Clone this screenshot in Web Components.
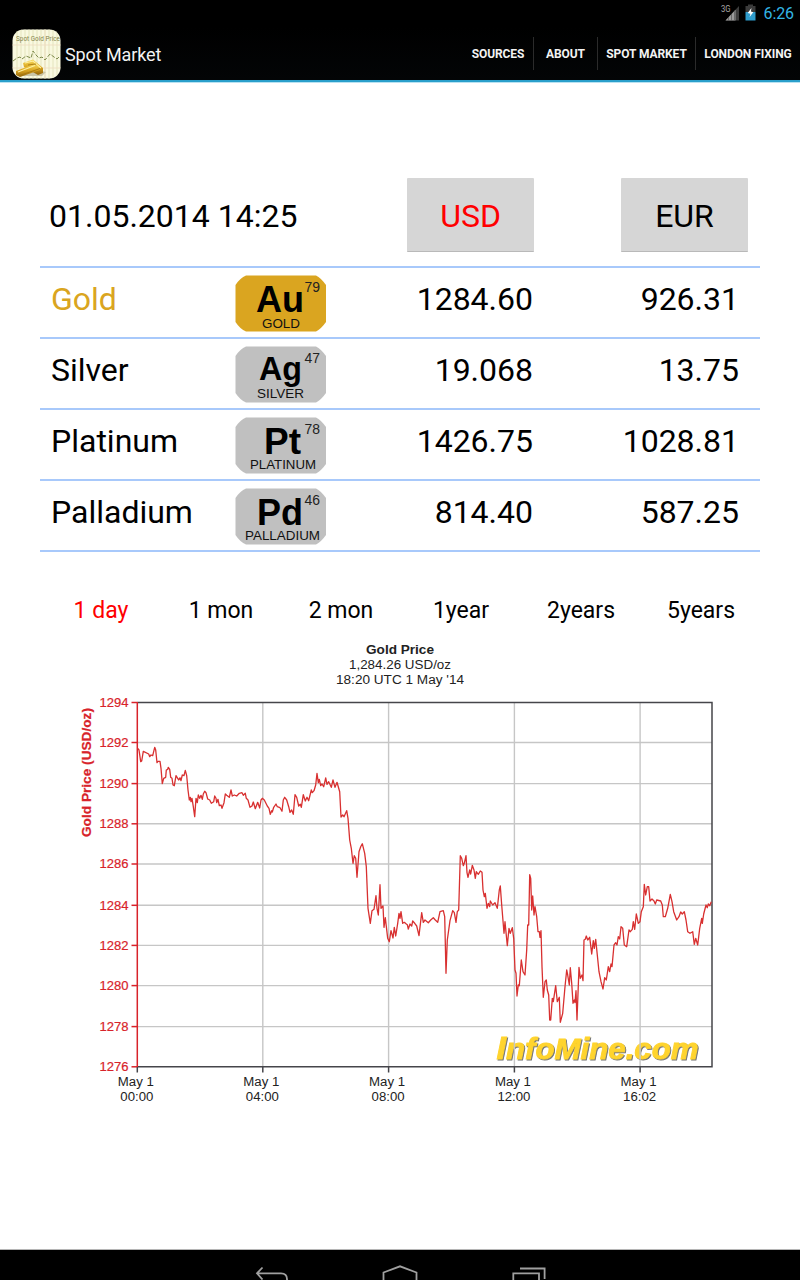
<!DOCTYPE html>
<html lang="en">
<head>
<meta charset="utf-8">
<title>Spot Market</title>
<style>
    html, body { margin: 0; padding: 0; }
    body {
        width: 800px;
        height: 1280px;
        overflow: hidden;
        background: #fff;
        color: #000;
        font-family: Roboto, "Liberation Sans", sans-serif;
    }
</style>
</head>
<body>
<spot-app></spot-app>

<script>
// Small helper: attach an open shadow root and fill it
function fill(el, html) {
    el.attachShadow({ mode: "open" }).innerHTML = html;
}

// Status bar with signal, battery and clock
class StatusBar extends HTMLElement {
    connectedCallback() {
        fill(this, `
            <style>
                :host {
                    display: flex;
                    justify-content: flex-end;
                    height: 27px;
                    background: #000;
                    color: #33b5e5;
                    font-size: 16px;
                    line-height: 27px;
                    padding-right: 6px;
                }
                svg { display: block; margin-right: 5px; }
                span { letter-spacing: -0.1px; }
            </style>
            <svg width="39" height="27" viewBox="0 0 39 27">
                <text x="1" y="11.5" font-size="8.5" fill="#a8a8a8" textLength="9.5" lengthAdjust="spacingAndGlyphs">3G</text>
                <path d="M5.5 20.5L19 6V20.5Z" fill="#3c3c3c"/>
                <path d="M5.5 20.5L15.5 9.8V20.5Z" fill="#9a9a9a"/>
                <path d="M8.5 17v4M11.5 14v7M14.5 11v10" stroke="#555" stroke-width=".7"/>
                <path d="M25.500 6H28V4.500H33V6H35.500V12H25.500Z" fill="#3b3b3b"/>
                <path d="M25.500 12H35.500V20.500H25.500Z" fill="#2f9ccc"/>
                <path d="M31.500 8L27.700 13L30.400 13.800L29.600 17L33.300 12.200L30.900 11.500Z" fill="#fff"/>
            </svg>
            <span>${this.getAttribute("time")}</span>
        `);
    }
}
customElements.define("status-bar", StatusBar);

// Launcher icon: gold bars in front of a price sheet
class AppIcon extends HTMLElement {
    connectedCallback() {
        fill(this, `
            <style>
                :host { display: block; width: 50px; height: 50px; }
                svg { display: block; }
            </style>
            <svg width="50" height="50" viewBox="0 0 50 50">
                <defs>
                    <clipPath id="c"><rect x=".5" y=".5" width="48" height="49" rx="11"/></clipPath>
                    <linearGradient id="g" x2="0" y2="1">
                        <stop offset="0" stop-color="#f8da5e"/>
                        <stop offset=".5" stop-color="#d9a520"/>
                        <stop offset="1" stop-color="#94660c"/>
                    </linearGradient>
                </defs>
                <g clip-path="url(#c)">
                    <rect width="50" height="50" fill="#f9f9e0"/>
                    <path d="M5 0V50M9 0V50M13 0V50M17 0V50M21 0V50M25 0V50M29 0V50M33 0V50M37 0V50M41 0V50M45 0V50" stroke="#e4e4bd" stroke-width="1"/>
                    <path d="M0 16H50M0 39H50M33 0V50" stroke="#efdcc0" stroke-width=".8"/>
                    <text x="4" y="11.5" font-size="6.5" fill="#85854a" textLength="44" lengthAdjust="spacingAndGlyphs">Spot Gold Price</text>
                    <path d="M1 32L5 29L8 28L10 30L14 27L19 29L21 22L24 26L27 29L30 28L33 31L38 25L42 28L45 30L49 26" fill="none" stroke="#7d8a4c" stroke-width="1" stroke-dasharray="4 1.500"/>
                    <path d="M7 47L30 47L34 43L20 40Z" fill="#c9c5a8"/>
                    <path d="M11 34L21 30.500L31 39L31 44L26 46L12 38Z" fill="url(#g)"/>
                    <path d="M4 42L22 35L28 38L28 41L8 48L4 46Z" fill="url(#g)"/>
                    <path d="M6 43L23 36.500M13 34L21 32L29 39" stroke="#fff0a0" stroke-width="1.100" fill="none"/>
                    <path d="M8 46.500L28 39.500M16 36L24 35" stroke="#a1740f" stroke-width=".8"/>
                </g>
            </svg>
        `);
    }
}
customElements.define("app-icon", AppIcon);

class MenuItem extends HTMLElement {
    connectedCallback() {
        fill(this, `
            <style>
                :host {
                    display: flex;
                    align-items: center;
                    justify-content: center;
                    box-sizing: border-box;
                    height: 33px;
                    padding-top: 1px;
                    border-left: 1px solid #2b2b2b;
                    color: #f3f3f3;
                    font-size: 12px;
                    font-weight: 700;
                    letter-spacing: -0.08px;
                    white-space: nowrap;
                }
                :host(:first-of-type) { border-color: transparent; }
            </style>
            <span><slot></slot></span>
        `);
    }
}
customElements.define("menu-item", MenuItem);

class ActionBar extends HTMLElement {
    connectedCallback() {
        fill(this, `
            <style>
                :host {
                    display: flex;
                    align-items: center;
                    box-sizing: border-box;
                    height: 55px;
                    padding-left: 12px;
                    background: linear-gradient(#000, #030506);
                    border-bottom: 2px solid #2a9fcb;
                    box-shadow: 0 1px 0 #b9e2f1;
                }
                h1 {
                    flex: 1;
                    margin: 0 0 0 3px;
                    padding-top: 2px;
                    color: #f3f3f3;
                    font-size: 18px;
                    font-weight: 400;
                    letter-spacing: -0.1px;
                }
                nav { display: flex; }
            </style>
            <app-icon></app-icon>
            <h1>${this.getAttribute("title")}</h1>
            <nav>
                <menu-item style="width:71px">SOURCES</menu-item>
                <menu-item style="width:64px">ABOUT</menu-item>
                <menu-item style="width:98px">SPOT MARKET</menu-item>
                <menu-item style="width:105px">LONDON FIXING</menu-item>
            </nav>
        `);
    }
}
customElements.define("action-bar", ActionBar);

class CurrencyButton extends HTMLElement {
    connectedCallback() {
        fill(this, `
            <style>
                :host { display: block; width: 127px; height: 74px; }
                button {
                    display: block;
                    width: 127px;
                    height: 74px;
                    padding: 3px 0 0 1px;
                    border: 0;
                    border-bottom: 1px solid #b9b9b9;
                    border-radius: 1px;
                    background: #d6d6d6;
                    color: #000;
                    font: 32px Roboto, sans-serif;
                }
                :host([active]) button { color: #f00; }
            </style>
            <button><slot></slot></button>
        `);
    }
}
customElements.define("currency-button", CurrencyButton);

// Periodic table tile
class ElementTile extends HTMLElement {
    connectedCallback() {
        const { symbol, number, name, color, sx, sy, sw, size, nx, ny, nw } = this.dataset;
        fill(this, `
            <style>
                :host { display: block; width: 92px; height: 58px; }
                svg { display: block; font-family: "Liberation Sans", Arial, sans-serif; }
            </style>
            <svg width="92" height="58" viewBox="0 0 92 58">
                <path d="M11 .5H81Q86 3 91 10V47Q86 54 81 56.500H11Q5 54 .5 47V10Q5 3 11 .5Z" fill="${color}"/>
                <text x="${sx}" y="${sy}" font-size="${size}" font-weight="700" textLength="${sw}" lengthAdjust="spacingAndGlyphs">${symbol}</text>
                <text x="69.500" y="16.500" font-size="14" fill="#222" textLength="15.500" lengthAdjust="spacingAndGlyphs">${number}</text>
                <text x="${nx}" y="${ny}" font-size="13.500" fill="#111" textLength="${nw}" lengthAdjust="spacingAndGlyphs">${name}</text>
            </svg>
        `);
    }
}
customElements.define("element-tile", ElementTile);

class MetalRow extends HTMLElement {
    connectedCallback() {
        fill(this, `
            <style>
                :host {
                    display: grid;
                    grid-template-columns: 184px 92px 206px 207px;
                    box-sizing: border-box;
                    height: 71px;
                    padding: 7px 0 0 11px;
                    border-bottom: 2px solid #a8c9fb;
                    font-size: 32px;
                    line-height: 48px;
                }
                :host([active]) .name { color: #daa520; }
                .price { text-align: right; }
                .eur { padding-right: 1px; }
                element-tile { margin-top: 1px; }
            </style>
            <span class="name">${this.getAttribute("name")}</span>
            <slot></slot>
            <span class="price">${this.getAttribute("usd")}</span>
            <span class="price eur">${this.getAttribute("eur")}</span>
        `);
    }
}
customElements.define("metal-row", MetalRow);

class PriceTable extends HTMLElement {
    connectedCallback() {
        fill(this, `
            <style>
                :host { display: block; margin: 0 40px; padding-top: 96px; }
                .head {
                    display: grid;
                    grid-template-columns: 366.500px 214px 127px;
                    height: 88px;
                    border-bottom: 2px solid #a8c9fb;
                    font-size: 32px;
                    line-height: 76px;
                }
                .date { padding-left: 9px; }
            </style>
            <div class="head">
                <span class="date">01.05.2014 14:25</span>
                <currency-button active>USD</currency-button>
                <currency-button>EUR</currency-button>
            </div>
            <metal-row active name="Gold" usd="1284.60" eur="926.31">
                <element-tile data-symbol="Au" data-number="79" data-name="GOLD" data-color="#daa520" data-sx="21" data-sy="37" data-sw="48" data-size="36" data-nx="27" data-ny="53.2" data-nw="38"></element-tile>
            </metal-row>
            <metal-row name="Silver" usd="19.068" eur="13.75">
                <element-tile data-symbol="Ag" data-number="47" data-name="SILVER" data-color="#c0c0c0" data-sx="24" data-sy="34" data-sw="43" data-size="33" data-nx="22" data-ny="52.3" data-nw="47"></element-tile>
            </metal-row>
            <metal-row name="Platinum" usd="1426.75" eur="1028.81">
                <element-tile data-symbol="Pt" data-number="78" data-name="PLATINUM" data-color="#c0c0c0" data-sx="29" data-sy="37" data-sw="37" data-size="36" data-nx="15" data-ny="52.3" data-nw="66"></element-tile>
            </metal-row>
            <metal-row name="Palladium" usd="814.40" eur="587.25">
                <element-tile data-symbol="Pd" data-number="46" data-name="PALLADIUM" data-color="#c0c0c0" data-sx="22" data-sy="37" data-sw="46" data-size="36" data-nx="10" data-ny="52.3" data-nw="75"></element-tile>
            </metal-row>
        `);
    }
}
customElements.define("price-table", PriceTable);

class PeriodTabs extends HTMLElement {
    connectedCallback() {
        const periods = ["1 day", "1 mon", "2 mon", "1year", "2years", "5years"];
        fill(this, `
            <style>
                :host {
                    display: grid;
                    grid-template-columns: repeat(6, 120px);
                    margin: 0 40px;
                    height: 83px;
                    padding: 44px 0 0 1px;
                    box-sizing: border-box;
                    font-size: 23px;
                    line-height: 30px;
                    text-align: center;
                }
                .on { color: #f00; }
            </style>
            ${periods.map((p, i) => `<span class="${i === 0 ? "on" : ""}">${p}</span>`).join("")}
        `);
    }
}
customElements.define("period-tabs", PeriodTabs);

// Samples in thirds of a pixel, one block per part of the day
const series = [
    { dx: 0, dy: 0, points: "203,175 207,180 212,215 215,213 220,184 236,192 239,200 243,195 248,197 254,172 257,180 261,218 264,214 270,214 273,235 277,281 281,265 287,262 289,240 293,238 295,232 299,238 302,262 306,265 309,285 313,287 318,257 323,265 326,270 330,263 333,272 337,255 342,257 346,241 350,257 354,300 358,330 361,322 363,335 366,325 370,350 374,380 378,325 382,338 385,315 389,325 393,316 397,328 400,312 404,304 408,308 413,327 419,330 424,340 431,335 434,318 438,325 440,338 444,328 448,347 453,345 456,355 462,338 466,312 470,316 478,322 483,300 487,318 493,315 500,318 508,310 516,308 520,316 526,310 529,325 534,330 540,352 546,348 550,336 556,356 563,337 569,354 573,330 577,325 583,330 592,348 597,355 601,373 605,362 607,366 611,352 618,342 622,350 630,353 636,364 640,330 644,322 650,330 656,350 660,367" },
    { dx: 660, dy: 0, points: "5,360 10,373 15,314 20,322 26,348 31,343 34,352 40,314 46,333 51,322 56,332 64,300 67,308 72,302 77,285 81,250 85,278 88,268 92,287 96,282 101,290 107,264 111,283 116,275 124,292 129,270 135,292 141,277 149,305 153,381 158,375 162,380 170,362 174,385 179,450 184,475 189,520 193,497 197,505 201,562 207,485 212,470 217,461 224,490 229,530 234,655 241,700 246,662 252,658 258,617 261,655 265,675 270,584 273,655 279,648 282,712 286,683 293,745 298,755 303,722 309,744 313,712 317,738 323,700 327,670 330,685 333,665 338,700 343,697 349,702 352,704 355,717 360,702 365,708 368,693 374,700 380,708 387,737 395,668 400,697 405,690 415,698 422,690 430,683 436,690 443,697 450,665 460,662 464,680 468,850 472,750 480,692 488,662 493,668 498,697 502,665 506,660 511,497 515,505 520,527 523,520 528,497 531,548 534,562 539,540 542,552 547,526 552,540 556,565 559,545 565,553 571,543 576,547 579,600 583,620 586,610 591,655 595,640 599,650 601,633 608,645 615,638 622,655 628,600" },
    { dx: 1290, dy: 450, points: "1,138 5,195 12,280 15,245 22,317 27,265 31,280 37,263 41,295 45,390 48,400 51,468 55,435 58,437 64,360 69,395 75,405 80,330 83,255 86,255 89,104 92,115 95,210 98,168 102,225 105,200 110,230 114,275 118,275 120,292 123,272 126,380 130,472 135,425 139,420 142,450 146,465 149,540 152,540 157,475 160,485 167,437 172,485 178,472 181,547 188,520 195,440 200,390 203,405 208,435 211,383 215,430 219,490 223,480 225,488 228,452 231,540 237,382 241,415 246,405 249,422 252,300 256,298 259,288 263,300 269,292 275,342 280,302 283,325 287,298 292,345 297,395 303,425 309,447 314,413 319,420 325,380 329,395 333,372 336,380 342,315 347,308 351,315 355,290 359,297 363,260 368,265 373,315 380,320 387,270 391,275 397,268 400,245 404,268 409,222 415,250 420,245 424,215 430,200 433,133 437,165 442,140 446,140 450,183 456,177 462,183 466,192 470,180 482,183 487,195 490,230 496,230 503,205 511,163 516,185 521,215 530,240 537,230 542,216 547,222 553,215 558,240 563,275 570,280 578,275 583,313 587,295 593,315 599,265 605,235 607,250 611,222 618,195 622,203 625,192 629,197 634,185" }
];

class PriceChart extends HTMLElement {
    connectedCallback() {
        const line = series.map(s => s.points.split(" ").map(p => {
            const [x, y] = p.split(",").map(Number);
            return ((x + s.dx) / 3 + 70).toFixed(1) + "," + ((y + s.dy) / 3 + 690).toFixed(1);
        }).join(" ")).join(" ");

        const rows = [702.5, 742.5, 783.6, 823.8, 864, 905.3, 945.4, 985.6, 1026.6, 1066.8];
        const cols = [
            [137.3, "00:00"], [262.8, "04:00"], [388.6, "08:00"], [514.4, "12:00"], [640.1, "16:02"]
        ];

        fill(this, `
            <style>
                :host { display: block; height: 480px; }
                svg { display: block; font-family: "Liberation Sans", Arial, sans-serif; font-size: 12.5px; }
                .grid { stroke: #c6c6c6; stroke-width: 1.4; }
                .red { fill: #d8232a; stroke: #d8232a; stroke-width: .2; }
                .tick { stroke: #d8232a; stroke-width: 1.5; }
                .frame { stroke: #45454a; stroke-width: 1.5; fill: none; }
                .logo {
                    fill: #ffd42e;
                    stroke: #ffd42e;
                    stroke-width: .9;
                    font-size: 29px;
                    font-weight: 700;
                    font-style: italic;
                    filter: drop-shadow(1.3px 1.3px .4px #777);
                }
            </style>
            <svg width="800" height="480" viewBox="0 635 800 480">
                <text x="366" y="654.300" font-weight="700" fill="#222" textLength="68" lengthAdjust="spacingAndGlyphs">Gold Price</text>
                <text x="349" y="669.300" fill="#222" textLength="102" lengthAdjust="spacingAndGlyphs">1,284.26 USD/oz</text>
                <text x="336" y="683.800" fill="#222" textLength="128" lengthAdjust="spacingAndGlyphs">18:20 UTC 1 May '14</text>
                <text class="logo" x="496.500" y="1059" textLength="202" lengthAdjust="spacingAndGlyphs"><tspan font-size="32">I</tspan>nfoMine.com</text>
                ${rows.slice(1, -1).map(y => `<path class="grid" d="M138 ${y}H712"/>`).join("")}
                ${cols.slice(1).map(c => `<path class="grid" d="M${c[0]} 703V1066"/>`).join("")}
                <path class="frame" d="M137 702.500H712V1066.800H137"/>
                <path class="tick" d="M137.300 702V1067"/>
                ${rows.map((y, i) => `
                    <path class="tick" d="M131.500 ${y}H137"/>
                    <text class="red" x="99.500" y="${y + 4.2}" textLength="29" lengthAdjust="spacingAndGlyphs">${1294 - i * 2}</text>
                `).join("")}
                ${cols.map(([x, t]) => `
                    <path class="frame" d="M${x} 1067V1072.500"/>
                    <text x="${x - 19.5}" y="1085.500" fill="#222" textLength="36" lengthAdjust="spacingAndGlyphs">May 1</text>
                    <text x="${x - 17}" y="1101.300" fill="#222" textLength="33" lengthAdjust="spacingAndGlyphs">${t}</text>
                `).join("")}
                <text class="red" transform="translate(91 837) rotate(-90)" font-weight="700" textLength="129" lengthAdjust="spacingAndGlyphs">Gold Price (USD/oz)</text>
                <polyline points="${line}" fill="none" stroke="#d83030" stroke-width="1.300" stroke-linejoin="round"/>
            </svg>
        `);
    }
}
customElements.define("price-chart", PriceChart);

// System navigation, the lower part runs off the screen
class NavBar extends HTMLElement {
    connectedCallback() {
        fill(this, `
            <style>
                :host {
                    display: block;
                    height: 30px;
                    margin-top: auto;
                    background: #000;
                    overflow: hidden;
                    box-shadow: 0 -1px 0 #b5b5b5;
                }
                svg { display: block; }
            </style>
            <svg width="800" height="30" viewBox="0 1250 800 30" fill="none" stroke="#a0a0a0" stroke-width="1.800">
                <path d="M262.500 1267.500L257 1273.300L262.500 1279.500M257.500 1273.300H281Q287 1273.300 287 1279V1284"/>
                <path d="M383.500 1284V1272.500L400 1266.300L416.500 1272.500V1284"/>
                <path d="M513.300 1284V1273.300H539V1284M520 1268.500H544.600V1279"/>
            </svg>
        `);
    }
}
customElements.define("nav-bar", NavBar);

class SpotApp extends HTMLElement {
    connectedCallback() {
        fill(this, `
            <style>
                :host { display: flex; flex-direction: column; height: 1280px; }
            </style>
            <status-bar time="6:26"></status-bar>
            <action-bar title="Spot Market"></action-bar>
            <price-table></price-table>
            <period-tabs></period-tabs>
            <price-chart></price-chart>
            <nav-bar></nav-bar>
        `);
    }
}
customElements.define("spot-app", SpotApp);
</script>
</body>
</html>
